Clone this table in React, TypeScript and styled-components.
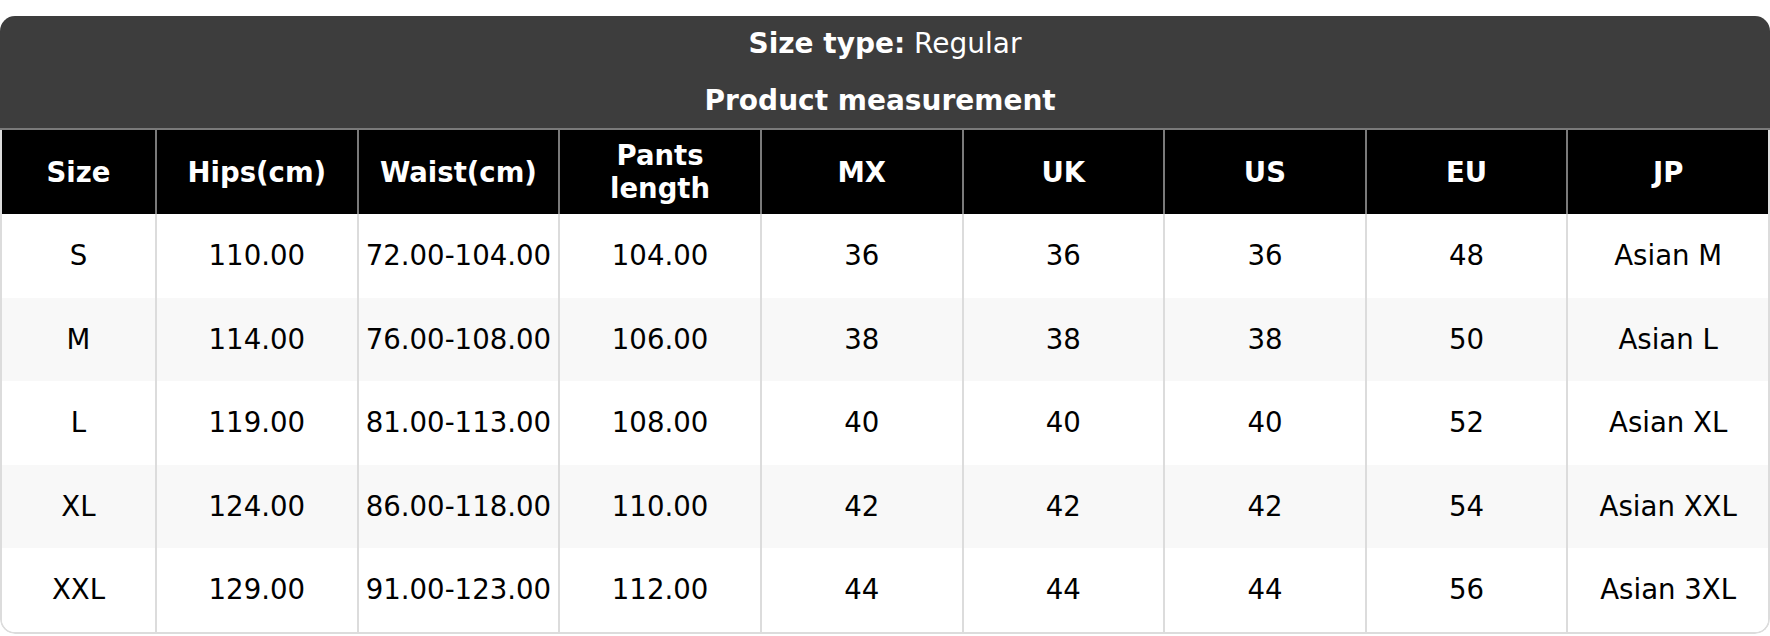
import React from 'react';
import styled, { createGlobalStyle } from 'styled-components';

const GlobalStyle = createGlobalStyle`
  html, body {
    margin: 0;
    padding: 0;
    background: #ffffff;
  }
  body {
    font-family: 'DejaVu Sans', Verdana, sans-serif;
  }
`;

const Page = styled.div`
  padding-top: 16px;
`;

const Card = styled.div`
  border-radius: 15px;
  overflow: hidden;
  background-color: #ffffff;
`;

const Caption = styled.div`
  background-color: #3d3d3d;
  color: #ffffff;
  text-align: center;
  padding: 11px 0 11px;
  border-bottom: 2px solid #7a7a7a;
  display: flex;
  flex-direction: column;
  gap: 23px;
`;

const CaptionLine = styled.div`
  font-size: 28px;
  line-height: 1.2;
  b {
    font-weight: 700;
  }
`;

const TableWrap = styled.div`
  border: 2px solid #dcdcdc;
  border-top: none;
  border-radius: 0 0 15px 15px;
  overflow: hidden;
`;

const Table = styled.table`
  width: 100%;
  table-layout: fixed;
  border-collapse: separate;
  border-spacing: 0;
`;

const HeadCell = styled.th`
  background-color: #000000;
  color: #ffffff;
  font-size: 27.5px;
  font-weight: 700;
  line-height: 1.2;
  padding: 9px 8px;
  text-align: center;
  vertical-align: middle;
  & + & {
    border-left: 2px solid #7a7a7a;
  }
`;

interface RowProps {
  $striped: boolean;
}

const Row = styled.tr<RowProps>`
  background-color: ${(props) => (props.$striped ? '#f8f8f8' : '#ffffff')};
`;

const Cell = styled.td`
  color: #000000;
  font-size: 27.6px;
  line-height: 1.2;
  padding: 25.2px 2px;
  text-align: center;
  vertical-align: middle;
  white-space: nowrap;
  & + & {
    border-left: 2px solid #dcdcdc;
  }
`;

const headers = ['Size', 'Hips(cm)', 'Waist(cm)', 'Pants length', 'MX', 'UK', 'US', 'EU', 'JP'];

const rows = [
  ['S', '110.00', '72.00-104.00', '104.00', '36', '36', '36', '48', 'Asian M'],
  ['M', '114.00', '76.00-108.00', '106.00', '38', '38', '38', '50', 'Asian L'],
  ['L', '119.00', '81.00-113.00', '108.00', '40', '40', '40', '52', 'Asian XL'],
  ['XL', '124.00', '86.00-118.00', '110.00', '42', '42', '42', '54', 'Asian XXL'],
  ['XXL', '129.00', '91.00-123.00', '112.00', '44', '44', '44', '56', 'Asian 3XL'],
];

const App = () => (
  <>
    <GlobalStyle />
    <Page>
      <Card>
        <Caption>
          <CaptionLine>
            <b>Size type:</b> Regular
          </CaptionLine>
          <CaptionLine>
            <b>Product measurement{'\u00a0'}</b>
          </CaptionLine>
        </Caption>
        <TableWrap>
          <Table>
            <colgroup>
              <col style={{ width: 153 }} />
              {headers.slice(1).map((h) => (
                <col key={h} />
              ))}
            </colgroup>
            <thead>
              <tr>
                {headers.map((h) => (
                  <HeadCell key={h}>{h}</HeadCell>
                ))}
              </tr>
            </thead>
            <tbody>
              {rows.map((r, i) => (
                <Row key={r[0]} $striped={i % 2 === 1}>
                  {r.map((c, j) => (
                    <Cell key={j}>{c}</Cell>
                  ))}
                </Row>
              ))}
            </tbody>
          </Table>
        </TableWrap>
      </Card>
    </Page>
  </>
);

export default App;
